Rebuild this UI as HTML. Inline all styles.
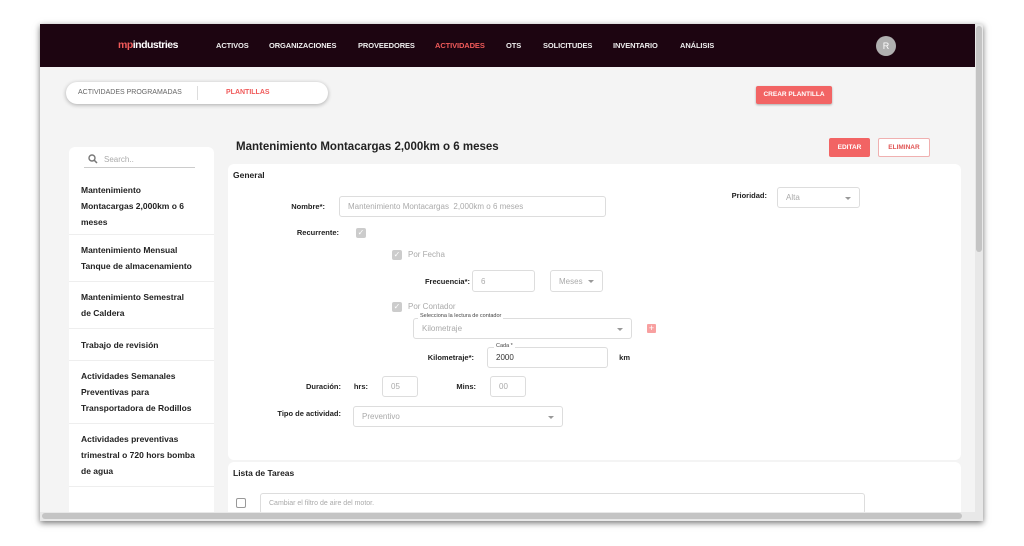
<!DOCTYPE html>
<html><head><meta charset="utf-8"><style>
*{margin:0;padding:0;box-sizing:border-box}
body{width:1024px;height:546px;background:#fff;font-family:"Liberation Sans",sans-serif;position:relative;overflow:hidden;color:#222}
.a{position:absolute}
#win{left:40px;top:24px;width:943px;height:497px;background:#f4f4f4;box-shadow:0 2px 6px rgba(0,0,0,.55);overflow:hidden}
.nav{left:0;top:0;width:935px;height:43px;background:#1d0511}
.ni{top:17px;font-size:7.5px;font-weight:bold;color:#eee;letter-spacing:-.1px}
.lbl{font-size:7.5px;font-weight:bold;color:#222;text-align:right}
.inp{background:#fff;border:1px solid #ddd;border-radius:3px;font-size:8px;color:#aaa;padding-left:8px;display:flex;align-items:center}
.chk{width:10px;height:10px;background:#ccc;border-radius:2px;color:#fff;font-size:8px;line-height:10px;text-align:center}
.gt{font-size:8px;color:#aaa}
.dd{position:absolute;right:8px;top:50%;margin-top:-1px;border-left:3px solid transparent;border-right:3px solid transparent;border-top:3px solid #999}
.si{left:0;width:145px;border-top:1px solid #eee;font-size:8.5px;font-weight:bold;line-height:16px;padding:0 24px 0 12px;display:flex;align-items:center}
</style></head><body>
<div id="win" class="a">
 <div class="a nav">
  <div class="a" style="left:78px;top:15px;font-size:10.5px;font-weight:bold;letter-spacing:-.5px;color:#fff"><span style="color:#f05a5a">mp</span>industries</div>
  <div class="a ni" style="left:176px">ACTIVOS</div>
  <div class="a ni" style="left:229px">ORGANIZACIONES</div>
  <div class="a ni" style="left:318px">PROVEEDORES</div>
  <div class="a ni" style="left:395px;color:#f05a5a">ACTIVIDADES</div>
  <div class="a ni" style="left:466px">OTS</div>
  <div class="a ni" style="left:503px">SOLICITUDES</div>
  <div class="a ni" style="left:573px">INVENTARIO</div>
  <div class="a ni" style="left:640px">ANÁLISIS</div>
  <div class="a" style="left:836px;top:12px;width:20px;height:20px;border-radius:50%;background:#b0b0b0;color:#fff;font-size:9px;text-align:center;line-height:20px">R</div>
 </div>
 <div class="a" style="left:26px;top:58px;width:262px;height:22px;background:#fff;border-radius:11px;box-shadow:0 1px 4px rgba(0,0,0,.3)">
  <div class="a" style="left:12px;top:7px;font-size:7px;color:#666">ACTIVIDADES PROGRAMADAS</div>
  <div class="a" style="left:131px;top:4px;width:1px;height:14px;background:#ddd"></div>
  <div class="a" style="left:160px;top:7px;font-size:7px;color:#f05a5a;font-weight:bold">PLANTILLAS</div>
 </div>
 <div class="a" style="left:716px;top:62px;width:76px;height:18px;background:#f26464;border-radius:2px;color:#fff;font-size:6.5px;font-weight:bold;text-align:center;line-height:18px;box-shadow:0 1px 2px rgba(0,0,0,.3)">CREAR PLANTILLA</div>
 <div class="a" style="left:29px;top:123px;width:145px;height:380px;background:#fff;border-radius:6px 6px 0 0">
  <div class="a" style="left:15px;top:6px;width:111px;height:15px;border-bottom:1px solid #ccc;font-size:8px;color:#aaa;padding-left:20px;line-height:13px">Search..</div>
  <svg class="a" style="left:19px;top:7px" width="10" height="10" viewBox="0 0 10 10"><circle cx="4" cy="4" r="3" fill="none" stroke="#777" stroke-width="1.4"/><path d="M6.2 6.2L9 9" stroke="#777" stroke-width="1.5"/></svg>
  <div class="a si" style="top:30px;height:58px;border-top:none">Mantenimiento Montacargas 2,000km o 6 meses</div>
  <div class="a si" style="top:87px;height:47px;padding-right:12px">Mantenimiento Mensual Tanque de almacenamiento</div>
  <div class="a si" style="top:134px;height:47px">Mantenimiento Semestral de Caldera</div>
  <div class="a si" style="top:181px;height:32px">Trabajo de revisión</div>
  <div class="a si" style="top:213px;height:63px;padding-right:12px">Actividades Semanales Preventivas para Transportadora de Rodillos</div>
  <div class="a si" style="top:276px;height:63px;padding-right:12px">Actividades preventivas trimestral o 720 hors bomba de agua</div>
  <div class="a si" style="top:339px;height:40px"></div>
 </div>
 <div class="a" style="left:196px;top:117px;font-size:11.5px;font-weight:bold">Mantenimiento Montacargas 2,000km o 6 meses</div>
 <div class="a" style="left:789px;top:114px;width:41px;height:19px;background:#f26464;border-radius:2px;color:#fff;font-size:6.5px;font-weight:bold;text-align:center;line-height:19px">EDITAR</div>
 <div class="a" style="left:838px;top:114px;width:52px;height:19px;background:#fff;border:1px solid #f0b0b0;border-radius:2px;color:#e05555;font-size:6.5px;font-weight:bold;text-align:center;line-height:17px">ELIMINAR</div>
 <div class="a" style="left:188px;top:140px;width:733px;height:296px;background:#fff;border-radius:6px"></div>
 <div class="a" style="left:188px;top:438px;width:733px;height:70px;background:#fff;border-radius:6px 6px 0 0"></div>
 <div class="a" style="left:193px;top:146px;font-size:8.5px;font-weight:bold">General</div>
 <div class="a lbl" style="left:240px;top:178px;width:45px">Nombre*:</div>
 <div class="a inp" style="left:299px;top:172px;width:267px;height:21px">Mantenimiento Montacargas&nbsp; 2,000km o 6 meses</div>
 <div class="a lbl" style="left:690px;top:167px;width:37px">Prioridad:</div>
 <div class="a inp" style="left:737px;top:163px;width:83px;height:21px">Alta<span class="dd"></span></div>
 <div class="a lbl" style="left:250px;top:204px;width:49px">Recurrente:</div>
 <div class="a chk" style="left:316px;top:204px">✓</div>
 <div class="a chk" style="left:352px;top:226px">✓</div><div class="a gt" style="left:368px;top:226px">Por Fecha</div>
 <div class="a lbl" style="left:370px;top:253px;width:60px">Frecuencia*:</div>
 <div class="a inp" style="left:432px;top:246px;width:63px;height:22px">6</div>
 <div class="a inp" style="left:510px;top:246px;width:53px;height:22px">Meses<span class="dd"></span></div>
 <div class="a chk" style="left:352px;top:278px">✓</div><div class="a gt" style="left:368px;top:278px">Por Contador</div>
 <div class="a inp" style="left:373px;top:294px;width:219px;height:21px">Kilometraje<span class="dd"></span></div>
 <div class="a" style="left:378px;top:289px;font-size:5.5px;color:#444;background:#fff;padding:0 2px">Selecciona la lectura de contador</div>
 <div class="a" style="left:607px;top:300px;width:9px;height:9px;background:#f8a0a0;border-radius:1px;color:#fff;font-size:9px;line-height:9px;text-align:center">+</div>
 <div class="a lbl" style="left:370px;top:329px;width:64px">Kilometraje*:</div>
 <div class="a inp" style="left:447px;top:323px;width:121px;height:21px;color:#333">2000</div>
 <div class="a" style="left:454px;top:319px;font-size:5.5px;color:#444;background:#fff;padding:0 2px">Cada *</div>
 <div class="a lbl" style="left:578px;top:329px;width:12px">km</div>
 <div class="a lbl" style="left:260px;top:358px;width:41px">Duración:</div>
 <div class="a lbl" style="left:310px;top:358px;width:18px">hrs:</div>
 <div class="a inp" style="left:342px;top:352px;width:36px;height:21px">05</div>
 <div class="a lbl" style="left:410px;top:358px;width:26px">Mins:</div>
 <div class="a inp" style="left:450px;top:352px;width:36px;height:21px">00</div>
 <div class="a lbl" style="left:230px;top:385px;width:71px">Tipo de actividad:</div>
 <div class="a inp" style="left:313px;top:382px;width:210px;height:21px">Preventivo<span class="dd"></span></div>
 <div class="a" style="left:193px;top:444px;font-size:8.5px;font-weight:bold">Lista de Tareas</div>
 <div class="a" style="left:196px;top:474px;width:10px;height:10px;border:1px solid #999;border-radius:2px;background:#fff"></div>
 <div class="a inp" style="left:220px;top:469px;width:605px;height:21px;font-size:7px">Cambiar el filtro de aire del motor.</div>
 <div class="a" style="left:935px;top:0;width:8px;height:497px;background:#e8e8e8"><div class="a" style="left:1px;top:2px;width:6px;height:226px;background:#c4c4c4;border-radius:3px"></div></div>
 <div class="a" style="left:0;top:488px;width:935px;height:9px;background:#e8e8e8"><div class="a" style="left:2px;top:1px;width:920px;height:6px;background:#c4c4c4;border-radius:3px"></div></div>
</div>
</body></html>
